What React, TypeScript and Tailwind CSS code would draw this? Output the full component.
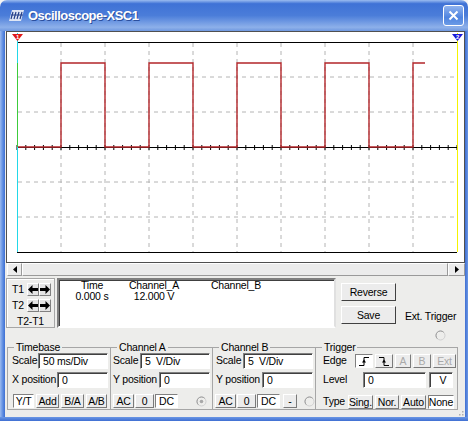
import React from "react";

const ui = "font-['Liberation_Sans',Arial,sans-serif]";

type BtnProps = {
  children?: React.ReactNode;
  pressed?: boolean;
  disabled?: boolean;
  className?: string;
};

function Btn({ children, pressed = false, disabled = false, className = "" }: BtnProps) {
  const face = pressed
    ? "bg-white border-t-[#808080] border-l-[#808080] border-b-white border-r-white"
    : "bg-[#ececec] border-t-white border-l-white border-b-[#7a7a7a] border-r-[#7a7a7a]";
  return (
    <div
      className={`flex h-[14px] shrink-0 items-center justify-center whitespace-nowrap border leading-none ${face} ${
        disabled ? "text-[#a9a9a9]" : "text-black"
      } ${className}`}
    >
      {children}
    </div>
  );
}

function Field({ value, className = "" }: { value: string; className?: string }) {
  return (
    <div
      className={`h-[16px] shrink-0 whitespace-pre border border-t-[#808080] border-l-[#808080] border-b-white border-r-white bg-white pl-[4px] leading-[14px] shadow-[inset_1px_1px_0_#404040] ${className}`}
    >
      {value}
    </div>
  );
}

function Radio({ checked = false }: { checked?: boolean }) {
  return (
    <svg width="11" height="11" viewBox="0 0 11 11" className="shrink-0">
      <circle cx="5.5" cy="5.5" r="4.5" fill="none" stroke="#cfcfcf" strokeWidth="1" />
      <path d="M2.3 8.7 A4.5 4.5 0 0 1 8.7 2.3" fill="none" stroke="#9a9a9a" strokeWidth="1" />
      {checked && <circle cx="5.5" cy="5.5" r="1.8" fill="#a8a8a8" />}
    </svg>
  );
}

function Group({
  title,
  className = "",
  children,
}: {
  title: string;
  className?: string;
  children: React.ReactNode;
}) {
  return (
    <fieldset className={`h-[69px] shrink-0 border-[#a6a6a6] pb-px ${className}`}>
      <legend className="ml-[6px] px-[2px] leading-[13px]">{title}</legend>
      {children}
    </fieldset>
  );
}

function Arrow({ dir }: { dir: "left" | "right" }) {
  return (
    <svg width="10" height="9" viewBox="0 0 10 9">
      {dir === "left" ? (
        <>
          <polygon points="0,4.5 4.5,0 4.5,9" fill="#000" />
          <rect x="4" y="3" width="6" height="3" fill="#000" />
        </>
      ) : (
        <>
          <polygon points="10,4.5 5.5,0 5.5,9" fill="#000" />
          <rect x="0" y="3" width="6" height="3" fill="#000" />
        </>
      )}
    </svg>
  );
}

function ArrowPair() {
  return (
    <div className="flex">
      {(["left", "right"] as const).map((d) => (
        <div
          key={d}
          className="flex h-[13px] w-[12px] items-center justify-center border border-t-white border-l-white border-b-[#808080] border-r-[#808080] bg-[#e4e4e4]"
        >
          <Arrow dir={d} />
        </div>
      ))}
    </div>
  );
}

function Plot() {
  const verts = [61, 105, 149, 193, 237, 281, 325, 369, 413];
  const hors = [77, 112, 182, 217];
  const ticks = Array.from({ length: 51 }, (_, i) => 17 + i * 8.8);
  const trace =
    "M17 147 H61 V63 H105 V147 H149 V63 H193 V147 H237 V63 H281 V147 H325 V63 H369 V147 H413 V63 H425";
  return (
    <svg width="457" height="230" viewBox="7 32 457 230" className="block">
      <rect x="7" y="32" width="457" height="230" fill="#fff" />
      {verts.map((x) => (
        <line key={x} x1={x} y1="43" x2={x} y2="252" stroke="#b4b4b4" strokeDasharray="4 4" />
      ))}
      {hors.map((y) => (
        <line key={y} x1="18" y1={y} x2="456" y2={y} stroke="#b4b4b4" strokeDasharray="4 4" />
      ))}
      <line x1="17" y1="42.5" x2="457" y2="42.5" stroke="#000" />
      <line x1="17" y1="252.5" x2="457" y2="252.5" stroke="#000" />
      <line x1="17" y1="147.5" x2="457" y2="147.5" stroke="#000" />
      {ticks.map((x) => (
        <line key={x} x1={x} y1="145" x2={x} y2="150" stroke="#000" />
      ))}
      <path d={trace} fill="none" stroke="#b3262a" strokeWidth="1.4" />
      <line x1="17.5" y1="33" x2="17.5" y2="252" stroke="#22d8e8" />
      <line x1="17.5" y1="63" x2="17.5" y2="147" stroke="#3ccc3c" />
      <line x1="457.5" y1="33" x2="457.5" y2="252" stroke="#f4f400" />
      <polygon points="12,34 23,34 17.5,41" fill="#e01818" />
      <text x="17.5" y="39" fontSize="6" fill="#fff" textAnchor="middle" fontFamily="Liberation Sans, sans-serif" fontWeight="bold">1</text>
      <polygon points="452,34 463,34 457.5,41" fill="#1a1ad8" />
      <text x="457.5" y="39" fontSize="6" fill="#fff" textAnchor="middle" fontFamily="Liberation Sans, sans-serif" fontWeight="bold">2</text>
    </svg>
  );
}

function EdgeIcon({ falling = false }: { falling?: boolean }) {
  return (
    <svg width="12" height="11" viewBox="0 0 12 11">
      <g transform={falling ? "translate(12 0) scale(-1 1)" : undefined}>
        <path d="M1 9.5 H6 V1.5 H11" fill="none" stroke="#000" strokeWidth="1" />
        <polygon points="4,6.5 6,3.5 8,6.5" fill="#000" />
      </g>
    </svg>
  );
}

function Row({ label, children, className = "" }: { label: string; children: React.ReactNode; className?: string }) {
  return (
    <div className={`flex h-[16px] items-center justify-between pr-[2px] ${className}`}>
      <span className="shrink-0 whitespace-nowrap">{label}</span>
      {children}
    </div>
  );
}

export default function App() {
  return (
    <div className={`h-[421px] w-[468px] overflow-hidden bg-[#f4f4f4] text-black ${ui}`}>
      <div className="flex h-full flex-col overflow-hidden rounded-t-[7px]">
        {/* title bar */}
        <div className="flex h-[31px] shrink-0 items-center bg-[linear-gradient(to_bottom,#9bbcf0_0%,#3f72d6_12%,#4b7dd9_50%,#8db0ea_88%,#6f98e0_100%)] pl-[8px] pr-[4px]">
          <svg width="17" height="13" viewBox="0 0 17 13" className="shrink-0">
            <polygon points="4,1 16,1 13,12 1,12" fill="#dfe6f4" />
            <path d="M5 3 L3 10 M8 3 L6 10 M11 3 L9 10 M14 3 L12 10" stroke="#24408a" strokeWidth="1.2" />
            <path d="M3 6 H15" stroke="#24408a" strokeWidth="1" />
          </svg>
          <span className="ml-[3px] text-[13px] font-bold tracking-[-0.04em] text-white [text-shadow:1px_1px_0_#2a4f9e]">
            Oscilloscope-XSC1
          </span>
          <div className="ml-auto flex h-[21px] w-[21px] items-center justify-center rounded-[3px] border border-white bg-[linear-gradient(to_bottom,#8fb2ee,#4f84e0_60%,#6b9be6)]">
            <svg width="11" height="11" viewBox="0 0 11 11">
              <path d="M1.5 1.5 L9.5 9.5 M9.5 1.5 L1.5 9.5" stroke="#fff" strokeWidth="2" />
            </svg>
          </div>
        </div>

        <div className="flex h-[386px] shrink-0">
          <div className="w-[5px] shrink-0 bg-[linear-gradient(to_right,#9bbaf0,#5a8ae0_60%,#3f6fd2)]" />

          {/* client */}
          <div className="flex w-[460px] shrink-0 flex-col bg-[#ededeb] text-[10.5px] tracking-[-0.2px]">
            <div className="ml-px h-[232px] w-[459px] shrink-0 border border-[#505050]">
              <Plot />
            </div>

            {/* scrollbar */}
            <div className="ml-[2px] flex h-[13px] w-[458px] shrink-0 bg-[#f3f3f0]">
              <div className="flex w-[15px] items-center justify-center border border-t-white border-l-white border-b-[#9a9a9a] border-r-[#9a9a9a] bg-[#ececec]">
                <svg width="4" height="7" viewBox="0 0 4 7">
                  <polygon points="0,3.5 4,0 4,7" fill="#000" />
                </svg>
              </div>
              <div className="w-[426px] border border-t-white border-l-white border-b-[#9a9a9a] border-r-[#9a9a9a] bg-[#ececec]" />
              <div className="flex flex-1 items-center justify-center border border-t-white border-l-white border-b-[#9a9a9a] border-r-[#9a9a9a] bg-[#ececec]">
                <svg width="4" height="7" viewBox="0 0 4 7">
                  <polygon points="4,3.5 0,0 0,7" fill="#000" />
                </svg>
              </div>
            </div>

            {/* readout row */}
            <div className="mt-[2px] flex h-[50px] shrink-0">
              <div className="ml-px flex w-[49px] shrink-0 flex-col border border-[#a6a6a6] shadow-[inset_1px_1px_0_#fff]">
                <div className="mt-[4px] flex h-[13px] items-center">
                  <span className="w-[20px] pl-[5px] leading-none">T1</span>
                  <ArrowPair />
                </div>
                <div className="mt-[3px] flex h-[13px] items-center">
                  <span className="w-[20px] pl-[5px] leading-none">T2</span>
                  <ArrowPair />
                </div>
                <div className="mt-[3px] pl-[10px] leading-[12px]">T2-T1</div>
              </div>

              <div className="ml-[2px] w-[279px] shrink-0 border-2 border-t-[#808080] border-l-[#808080] border-b-white border-r-[#e0e0e0] bg-white pl-[3px] leading-[11px] shadow-[inset_1px_1px_0_#404040]">
                <div className="flex">
                  <span className="w-[60px] text-center">Time</span>
                  <span className="w-[64px] text-center">Channel_A</span>
                  <span className="ml-[18px] w-[64px] text-center">Channel_B</span>
                </div>
                <div className="flex">
                  <span className="w-[60px] text-center">0.000 s</span>
                  <span className="w-[64px] text-center">12.000 V</span>
                </div>
              </div>

              <div className="ml-[5px] flex w-[55px] shrink-0 flex-col">
                <Btn className="mt-[5px] h-[18px] border-b-[#404040] border-r-[#404040]">Reverse</Btn>
                <Btn className="mt-[5px] h-[18px] border-b-[#404040] border-r-[#404040]">Save</Btn>
              </div>

              <div className="flex flex-1 flex-col">
                <span className="mt-[32px] whitespace-nowrap pl-[9px] leading-[12px]">Ext. Trigger</span>
                <div className="ml-[39px] mt-[8px]">
                  <Radio />
                </div>
              </div>
            </div>

            {/* control groups */}
            <div className="mt-[13px] flex shrink-0">
              <Group title="Timebase" className="ml-[2px] w-[103px] border-t border-l border-b">
                <Row label="Scale" className="-mt-px pl-[4px]">
                  <Field value="50 ms/Div" className="w-[70px]" />
                </Row>
                <Row label="X position" className="mt-[3px] pl-[4px]">
                  <Field value="0" className="w-[51px]" />
                </Row>
                <div className="mt-[6px] flex gap-[2px] pl-[5px]">
                  <Btn pressed className="w-[21px]">Y/T</Btn>
                  <Btn className="w-[23px]">Add</Btn>
                  <Btn className="w-[23px]">B/A</Btn>
                  <Btn className="w-[21px]">A/B</Btn>
                </div>
              </Group>

              <Group title="Channel A" className="w-[102px] border-t border-l border-b">
                <Row label="Scale" className="-mt-px pl-[2px]">
                  <Field value="5  V/Div" className="w-[70px]" />
                </Row>
                <Row label="Y position" className="mt-[3px] pl-[2px]">
                  <Field value="0" className="w-[51px]" />
                </Row>
                <div className="mt-[6px] flex items-center pl-[2px]">
                  <Btn className="w-[21px]">AC</Btn>
                  <Btn className="ml-px w-[19px]">0</Btn>
                  <Btn pressed className="ml-px w-[23px]">DC</Btn>
                  <div className="ml-[18px]">
                    <Radio checked />
                  </div>
                </div>
              </Group>

              <Group title="Channel B" className="w-[102px] border-t border-l border-b">
                <Row label="Scale" className="-mt-px pl-[3px]">
                  <Field value="5  V/Div" className="w-[70px]" />
                </Row>
                <Row label="Y position" className="mt-[3px] pl-[3px]">
                  <Field value="0" className="w-[51px]" />
                </Row>
                <div className="mt-[6px] flex items-center pl-[2px]">
                  <Btn className="w-[21px]">AC</Btn>
                  <Btn className="ml-px w-[19px]">0</Btn>
                  <Btn pressed className="ml-px w-[23px]">DC</Btn>
                  <Btn className="ml-[3px] w-[14px]">-</Btn>
                  <div className="ml-[7px]">
                    <Radio />
                  </div>
                </div>
              </Group>

              <Group title="Trigger" className="w-[143px] border">
                <div className="-mt-px flex h-[16px] items-center pl-[7px]">
                  <span className="w-[32px] shrink-0">Edge</span>
                  <Btn pressed className="w-[18px]">
                    <EdgeIcon />
                  </Btn>
                  <Btn className="ml-[2px] w-[18px]">
                    <EdgeIcon falling />
                  </Btn>
                  <Btn disabled className="ml-[2px] w-[16px]">A</Btn>
                  <Btn disabled className="ml-[2px] w-[18px]">B</Btn>
                  <Btn disabled className="ml-[2px] w-[23px]">Ext</Btn>
                </div>
                <div className="mt-[3px] flex h-[16px] items-center pl-[7px]">
                  <span className="w-[40px] shrink-0">Level</span>
                  <Field value="0" className="w-[63px]" />
                  <Field value="V" className="ml-[3px] w-[24px] pl-0 text-center" />
                </div>
                <div className="mt-[6px] flex items-center pl-[7px]">
                  <span className="w-[25px] shrink-0">Type</span>
                  <Btn className="w-[25px]">Sing.</Btn>
                  <Btn className="ml-[2px] w-[24px]">Nor.</Btn>
                  <Btn className="ml-[2px] w-[25px]">Auto</Btn>
                  <Btn pressed className="ml-[2px] w-[26px]">None</Btn>
                </div>
              </Group>
            </div>

            {/* bottom strip with size grip */}
            <div className="flex flex-1 items-end justify-end pb-[3px] pr-[1px]">
              <svg width="9" height="9" viewBox="0 0 9 9">
                {[
                  [7, 1],
                  [4, 4],
                  [7, 4],
                  [1, 7],
                  [4, 7],
                  [7, 7],
                ].map(([x, y]) => (
                  <rect key={`${x}-${y}`} x={x} y={y} width="1.5" height="1.5" fill="#b0b0b0" />
                ))}
              </svg>
            </div>
          </div>

          <div className="w-[3px] shrink-0 bg-[linear-gradient(to_right,#3f6fd2,#6b97e4)]" />
        </div>

        <div className="h-[4px] shrink-0 bg-[linear-gradient(to_bottom,#6b97e4,#3f6fd2)]" />
      </div>
    </div>
  );
}
